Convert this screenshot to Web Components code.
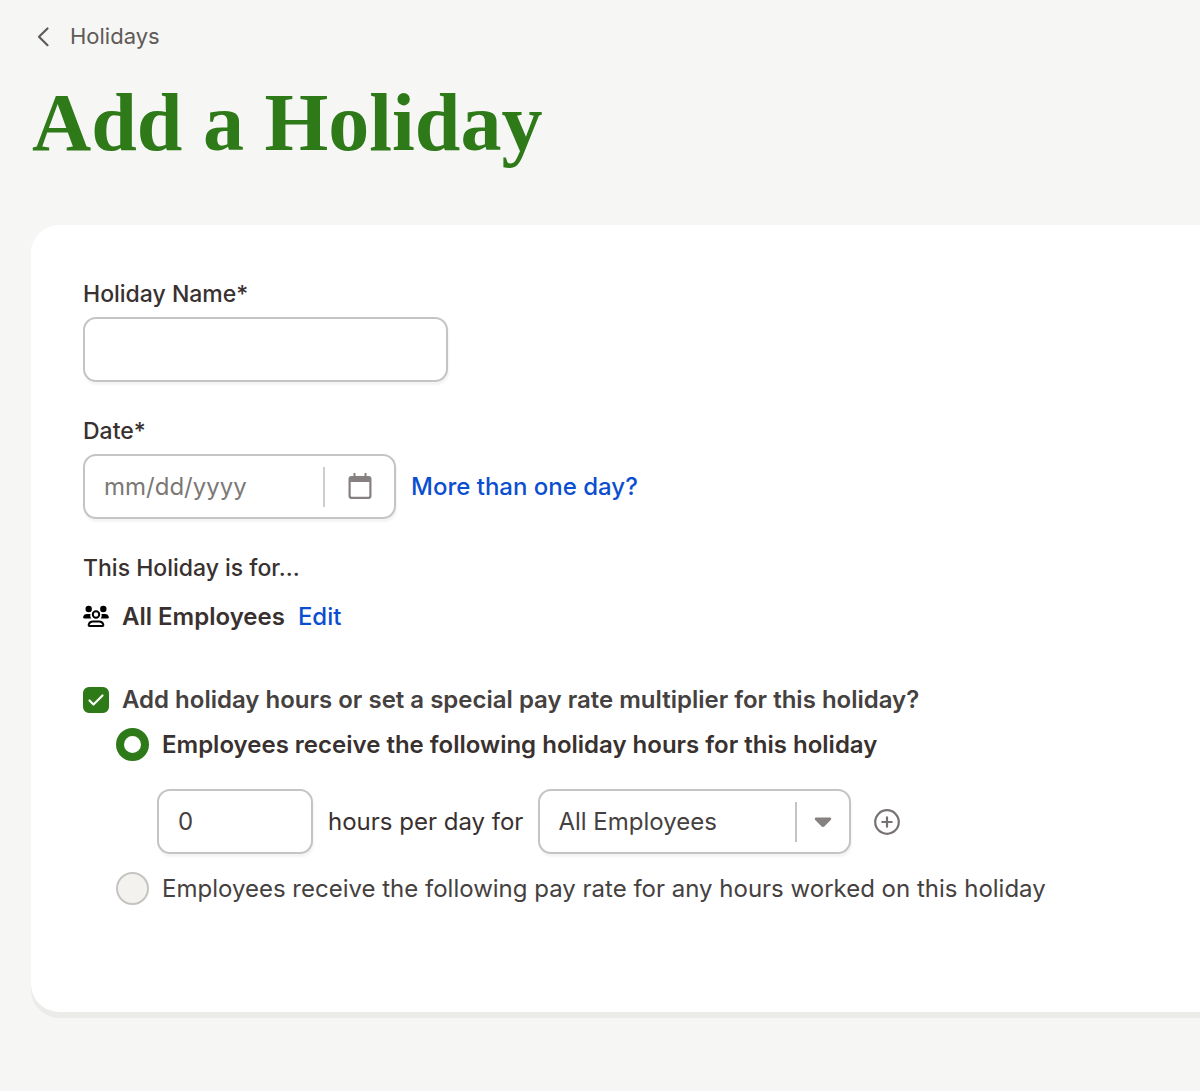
<!DOCTYPE html>
<html lang="en">
<head>
<meta charset="utf-8">
<meta name="viewport" content="width=device-width, initial-scale=1">
<title>Add a Holiday</title>
<style>
html {
        background: #f6f6f4;
}

body {
        color: #38312f;
        font: 400 24px/32px Inter, "Liberation Sans", sans-serif;
        margin: 0;
        --border: #c6c4c3;
        --green: #2e7918;
        --icon: #868080;
        --link: #0b4fd0;
        --shadow: 1px 3px 2px rgba(56, 49, 47, .05);
}
</style>
</head>
<body>
<holiday-page></holiday-page>

<script>
const makeTemplate = (html) => {
        const template = document.createElement('template')
        template.innerHTML = html
        return template
}

class BaseElement extends HTMLElement {
        constructor () {
                super()
                this.attachShadow({ mode: 'open' })
                this.shadowRoot.append(this.constructor.template.content.cloneNode(true))
        }

        find (selector) {
                return this.shadowRoot.querySelector(selector)
        }
}

/* Back link and page title */
class PageHeader extends BaseElement {
        static template = makeTemplate(`
<style>
:host {
        display: block;
        padding: 20px 0 0 32px;
}

.back {
        align-items: center;
        color: #5f5a58;
        display: inline-flex;
        font-size: 22px;
        gap: 14px;
        text-decoration: none;
}

h1 {
        color: var(--green);
        font: 700 82px/96px "Liberation Serif", serif;
        margin: 19px 0 0;
}

svg {
        display: block;
}
</style>
<nav>
        <a class="back" href="#holidays">
                <svg width="24" height="24" viewBox="0 0 24 24" fill="none" stroke="currentColor" stroke-width="2.200" stroke-linecap="round" stroke-linejoin="round" aria-hidden="true"><path d="M15.500 4.500 7 12.800l8.500 8.400"/></svg>
                <slot name="back"></slot>
        </a>
</nav>
<h1><slot></slot></h1>
`)
}

class FormCard extends BaseElement {
        static template = makeTemplate(`
<style>
:host {
        background: #fff;
        border-radius: 28px 0 0 28px;
        box-shadow: 0 6px 0 #ebebe9;
        display: block;
        margin: 54px 0 72px 31px;
        padding: 53px 52px 107px;
}
</style>
<slot></slot>
`)
}

class TextField extends BaseElement {
        static template = makeTemplate(`
<style>
:host {
        display: block;
}

.label {
        display: block;
        font-size: 23px;
        font-weight: 500;
        margin-bottom: 7px;
}

.label[hidden] {
        display: none;
}

.row {
        align-items: center;
        display: flex;
        gap: 15px;
}

.box {
        align-items: center;
        background: #fff;
        border: 2px solid var(--border);
        border-radius: 13px;
        box-shadow: var(--shadow);
        box-sizing: border-box;
        display: flex;
        height: 65px;
        width: var(--field-width, 365px);
}

input {
        background: none;
        border: 0;
        color: #454140;
        flex: 1;
        font: inherit;
        min-width: 0;
        outline: 0;
        padding: 0 19px;
}

input::placeholder {
        color: #7c7876;
        opacity: 1;
}

.box:focus-within {
        border-color: var(--green);
}
</style>
<label class="label" for="input"></label>
<div class="row">
        <div class="box">
                <input id="input" type="text" autocomplete="off">
                <slot name="action"></slot>
        </div>
        <slot name="after"></slot>
</div>
`)

        connectedCallback () {
                const label = this.find('label')
                const input = this.find('input')

                label.textContent = this.getAttribute('label') || ''
                label.hidden = !this.hasAttribute('label')
                input.placeholder = this.getAttribute('placeholder') || ''
                input.value = this.getAttribute('value') || ''

                if (this.hasAttribute('name')) {
                        input.setAttribute('aria-label', this.getAttribute('name'))
                }
        }
}

class CalendarButton extends BaseElement {
        static template = makeTemplate(`
<style>
:host {
        display: block;
}

button {
        align-items: center;
        background: none;
        border: 0;
        border-left: 2px solid #cfcdcb;
        color: var(--icon);
        cursor: pointer;
        display: flex;
        height: 40px;
        justify-content: center;
        padding: 0;
        width: 71px;
}
</style>
<button type="button" aria-label="Open calendar">
        <svg width="24" height="28" viewBox="0 0 24 28" aria-hidden="true">
                <path d="M5.500 0h2v3h9V0h2v3h2A3 3 0 0 1 23.500 6v17a3 3 0 0 1-3 3h-17a3 3 0 0 1-3-3V6a3 3 0 0 1 3-3h2Zm-2.800 9v13.800a1 1 0 0 0 1 1h16.600a1 1 0 0 0 1-1V9Z" fill="currentColor" fill-rule="evenodd"/>
        </svg>
</button>
`)
}

class TextLink extends BaseElement {
        static template = makeTemplate(`
<style>
:host {
        display: block;
}

a {
        color: var(--link);
        font-weight: 500;
        text-decoration: none;
}

a:hover {
        text-decoration: underline;
}
</style>
<a href="#"><slot></slot></a>
`)

        connectedCallback () {
                this.find('a').href = this.getAttribute('to')
        }
}

/* Who the holiday applies to */
class AudiencePicker extends BaseElement {
        static template = makeTemplate(`
<style>
:host {
        display: block;
}

.caption {
        font-size: 23px;
        font-weight: 500;
        margin: 0 0 17px;
}

.row {
        align-items: center;
        display: flex;
        gap: 13px;
}

.name {
        font-weight: 600;
}

svg {
        color: #000;
        display: block;
}
</style>
<p class="caption"><slot name="caption"></slot></p>
<div class="row">
        <svg width="26" height="24" viewBox="0 0 26 24" fill="currentColor" aria-hidden="true">
                <circle cx="5.700" cy="4" r="3.200"/>
                <circle cx="20.300" cy="4" r="3.200"/>
                <path d="M4 9h3.500c-.5 1.600-.2 3.200.8 4.500H1.300c-.8 0-1.300-.5-1.200-1.200C.4 10.200 1.900 9 4 9ZM22 9h-3.500c.5 1.600.2 3.200-.8 4.500h7c.8 0 1.300-.5 1.200-1.200-.3-2.100-1.800-3.300-3.900-3.300Z"/>
                <circle cx="13" cy="9.500" r="3.200" fill="none" stroke="currentColor" stroke-width="2"/>
                <path d="M10 16.500h6c2.300 0 3.900 1.300 4.300 3.400.1.600-.2 1.100-.8 1.100h-13c-.6 0-.9-.5-.8-1.100.4-2.100 2-3.400 4.300-3.400Z" fill="none" stroke="currentColor" stroke-width="2"/>
        </svg>
        <span class="name"><slot></slot></span>
        <slot name="edit"></slot>
</div>
`)
}

class CheckOption extends BaseElement {
        static template = makeTemplate(`
<style>
:host {
        color: #454140;
        display: block;
        font-weight: 600;
}

label {
        align-items: center;
        display: flex;
        gap: 13px;
}

.control {
        display: grid;
        flex: none;
        place-items: center;
}

input {
        appearance: none;
        background: #f3f2ef;
        border: 2px solid var(--border);
        border-radius: 6px;
        box-sizing: border-box;
        grid-area: 1 / 1;
        height: 26px;
        margin: 0;
        width: 26px;
}

input:checked {
        background: var(--green);
        border-color: var(--green);
}

svg {
        grid-area: 1 / 1;
        pointer-events: none;
}

input:not(:checked) + svg {
        visibility: hidden;
}
</style>
<label>
        <span class="control">
                <input type="checkbox">
                <svg width="26" height="26" viewBox="0 0 26 26" fill="none" stroke="#fff" stroke-width="2.200" stroke-linecap="round" stroke-linejoin="round" aria-hidden="true"><path d="m6.500 13.500 4 4 9-9"/></svg>
        </span>
        <span><slot></slot></span>
</label>
`)

        connectedCallback () {
                this.find('input').checked = this.hasAttribute('checked')
        }
}

class RadioOption extends BaseElement {
        static template = makeTemplate(`
<style>
:host {
        color: #454140;
        display: block;
}

:host([checked]) {
        color: #38312f;
        font-weight: 600;
}

label {
        align-items: center;
        display: flex;
        gap: 13px;
}

input {
        appearance: none;
        background: #f3f2ef;
        border: 2px solid var(--border);
        border-radius: 50%;
        box-sizing: border-box;
        flex: none;
        height: 33px;
        margin: 0;
        width: 33px;
}

input:checked {
        background: #fff;
        border: 8px solid var(--green);
}
</style>
<label>
        <input type="radio">
        <span><slot></slot></span>
</label>
`)

        connectedCallback () {
                const input = this.find('input')
                input.checked = this.hasAttribute('checked')

                // Radios in separate shadow roots are not grouped by the browser
                input.addEventListener('change', () => {
                        this.parentNode.querySelectorAll('radio-option').forEach((option) => {
                                option.toggleAttribute('checked', option === this)
                                option.find('input').checked = option === this
                        })
                })
        }
}

class SelectField extends BaseElement {
        static template = makeTemplate(`
<style>
:host {
        display: grid;
        width: 313px;
}

select {
        appearance: none;
        background: #fff;
        border: 2px solid var(--border);
        border-radius: 13px;
        box-shadow: var(--shadow);
        box-sizing: border-box;
        color: #454140;
        font: inherit;
        grid-area: 1 / 1;
        height: 65px;
        padding: 0 70px 0 18px;
        width: 100%;
}

.arrow {
        align-items: center;
        align-self: center;
        border-left: 2px solid var(--border);
        box-sizing: border-box;
        color: var(--icon);
        display: flex;
        grid-area: 1 / 1;
        height: 40px;
        justify-self: end;
        padding-left: 17px;
        pointer-events: none;
        width: 56px;
        z-index: 1;
}
</style>
<select></select>
<span class="arrow">
        <svg width="18" height="12" viewBox="0 0 18 12" aria-hidden="true"><path d="M2 1.500h14c1.200 0 1.700 1.300.9 2.200l-6.300 6.600c-.9.900-2.300.9-3.200 0L1.100 3.700C.3 2.800.8 1.500 2 1.500Z" fill="currentColor"/></svg>
</span>
`)

        connectedCallback () {
                const select = this.find('select')
                select.setAttribute('aria-label', this.getAttribute('name'))
                select.add(new Option(this.getAttribute('value')))
        }
}

class AddButton extends BaseElement {
        static template = makeTemplate(`
<style>
:host {
        display: block;
        margin-left: 8px;
}

button {
        background: none;
        border: 0;
        color: #777271;
        cursor: pointer;
        display: block;
        padding: 0;
}

svg {
        display: block;
}
</style>
<button type="button" aria-label="Add another group">
        <svg width="26" height="26" viewBox="0 0 26 26" fill="none" stroke="currentColor" stroke-width="2.200" stroke-linecap="round" aria-hidden="true">
                <circle cx="13" cy="13" r="11.800"/>
                <path d="M8.300 13h9.400M13 8.300v9.400"/>
        </svg>
</button>
`)
}

class HolidayPage extends BaseElement {
        static template = makeTemplate(`
<style>
:host {
        display: block;
}

form {
        display: flex;
        flex-direction: column;
}

text-field {
        margin-bottom: 33px;
}

.date {
        --field-width: 313px;
}

audience-picker {
        margin-bottom: 51px;
}

.options {
        padding: 12px 0 0 33px;
}

.hours {
        align-items: center;
        display: flex;
        gap: 15px;
        padding: 28px 0 18px 41px;
}

.hours text-field {
        --field-width: 156px;
        margin: 0;
}
</style>
<page-header>
        <span slot="back">Holidays</span>
        Add a Holiday
</page-header>
<main>
        <form-card>
                <form>
                        <text-field label="Holiday Name*"></text-field>
                        <text-field class="date" label="Date*" placeholder="mm/dd/yyyy">
                                <calendar-button slot="action"></calendar-button>
                                <text-link slot="after" to="#range">More than one day?</text-link>
                        </text-field>
                        <audience-picker>
                                <span slot="caption">This Holiday is for...</span>
                                All Employees
                                <text-link slot="edit" to="#edit">Edit</text-link>
                        </audience-picker>
                        <check-option checked>Add holiday hours or set a special pay rate multiplier for this holiday?</check-option>
                        <div class="options">
                                <radio-option checked>Employees receive the following holiday hours for this holiday</radio-option>
                                <div class="hours">
                                        <text-field name="Hours per day" value="0"></text-field>
                                        <span>hours per day for</span>
                                        <select-field name="Group" value="All Employees"></select-field>
                                        <add-button></add-button>
                                </div>
                                <radio-option>Employees receive the following pay rate for any hours worked on this holiday</radio-option>
                        </div>
                </form>
        </form-card>
</main>
`)
}

window.customElements.define('page-header', PageHeader)
window.customElements.define('form-card', FormCard)
window.customElements.define('text-field', TextField)
window.customElements.define('calendar-button', CalendarButton)
window.customElements.define('text-link', TextLink)
window.customElements.define('audience-picker', AudiencePicker)
window.customElements.define('check-option', CheckOption)
window.customElements.define('radio-option', RadioOption)
window.customElements.define('select-field', SelectField)
window.customElements.define('add-button', AddButton)
window.customElements.define('holiday-page', HolidayPage)
</script>
</body>
</html>
